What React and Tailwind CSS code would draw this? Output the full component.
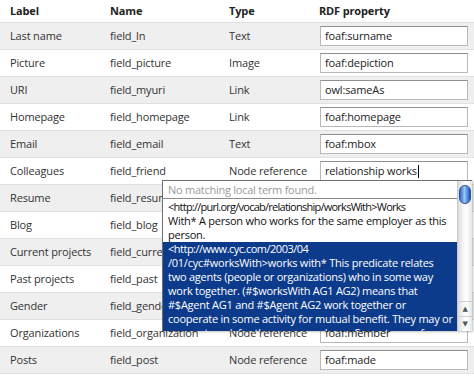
import React from "react";

const rows = [
  ["Last name", "field_ln", "Text", "foaf:surname"],
  ["Picture", "field_picture", "Image", "foaf:depiction"],
  ["URI", "field_myuri", "Link", "owl:sameAs"],
  ["Homepage", "field_homepage", "Link", "foaf:homepage"],
  ["Email", "field_email", "Text", "foaf:mbox"],
  ["Colleagues", "field_friend", "Node reference", "relationship works"],
  ["Resume", "field_resume", "Node reference", ""],
  ["Blog", "field_blog", "Node reference", ""],
  ["Current projects", "field_current", "Node reference", ""],
  ["Past projects", "field_past", "Node reference", ""],
  ["Gender", "field_gender", "Text", ""],
  ["Organizations", "field_organization", "Node reference", "foaf:member"],
  ["Posts", "field_post", "Node reference", "foaf:made"],
];

const item1 = [
  ["<http://purl.org/vocab/relationship/worksWith>Works", true],
  ["With* A person who works for the same employer as this", false],
  ["person.", false],
];
const item2 = [
  ["<http://www.cyc.com/2003/04", true],
  ["/01/cyc#worksWith>works with* This predicate relates", false],
  ["two agents (people or organizations) who in some way", false],
  ["work together. (#$worksWith AG1 AG2) means that", false],
  ["#$Agent AG1 and #$Agent AG2 work together or", false],
  ["cooperate in some activity for mutual benefit. They may or", false],
  ["may not work for the same employer. Some types of", false],
];

export default function App() {
  return (
    <div className="relative w-[474px] h-[377px] overflow-hidden bg-white text-[11px] tracking-[-0.15px] text-[#333] font-['Open_Sans','DejaVu_Sans',sans-serif]">
      <div className="flex items-center h-[23px] font-bold text-[#222] border-b border-[#dedede]">
        <div className="w-[110px] pl-[10px]">Label</div>
        <div className="w-[119px]">Name</div>
        <div className="w-[90px]">Type</div>
        <div>RDF property</div>
      </div>
      {rows.map((r, i) => (
        <div
          key={i}
          className={`flex items-center h-[27px] border-b border-[#e0e0e0] ${i % 2 === 0 ? "bg-[#efefef]" : "bg-white"}`}
        >
          <div className="w-[110px] pl-[10px] whitespace-nowrap overflow-hidden">{r[0]}</div>
          <div className="w-[119px] whitespace-nowrap overflow-hidden">{r[1]}</div>
          <div className="w-[90px] whitespace-nowrap overflow-hidden">{r[2]}</div>
          <div className="w-[148px] h-[20px] ml-[1px] bg-white border border-[#b8b8b8] border-t-[#8f8f8f] flex items-center px-[4px] text-[#222] whitespace-nowrap overflow-hidden">
            {r[3]}
            {i === 5 && <span className="inline-block w-px h-[13px] bg-black ml-[1px]" />}
          </div>
        </div>
      ))}

      <div className="absolute left-[162px] top-[180px] w-[310px] h-[151px] bg-white border-l border-t border-[#6f6f6f] flex overflow-hidden shadow-[1px_1px_2px_rgba(0,0,0,0.25)]">
        <div className="flex-1 overflow-hidden leading-[14px] tracking-[-0.25px]">
          <div className="h-[18px] flex items-center pl-[5px] text-[#9a9a9a] border-b border-[#8a8a8a] whitespace-nowrap">
            No matching local term found.
          </div>
          <div className="pt-[1px] pl-[5px] text-[#111]">
            {item1.map(([l, u], k) => (
              <div key={k} className={`whitespace-nowrap ${u ? "tracking-[-0.75px]" : ""}`}>{l}</div>
            ))}
          </div>
          <div className="bg-[#0d3b8c] text-white pl-[5px] h-[200px]">
            {item2.map(([l, u], k) => (
              <div key={k} className={`whitespace-nowrap ${u ? "tracking-[-0.5px]" : ""}`}>{l}</div>
            ))}
          </div>
        </div>
        <div className="w-[15px] h-full flex flex-col bg-[linear-gradient(to_right,#dcdcdc,#f7f7f7_40%,#ffffff_60%,#e6e6e6)] border-l border-[#c8c8c8]">
          <div className="flex-1 px-[1px] pt-[4px] pb-[2px]">
            <div className="h-[19px] w-[12px] rounded-full bg-[linear-gradient(to_right,#2c66c8,#9cc6f5_45%,#5a96e4_70%,#1e55b5)] border border-[#2a4f93]" />
          </div>
          <div className="h-[15px] flex items-center justify-center text-[7px] text-[#555] border-t border-[#cfcfcf]">▲</div>
          <div className="h-[15px] flex items-center justify-center text-[7px] text-[#555] border-t border-[#cfcfcf]">▼</div>
        </div>
      </div>
    </div>
  );
}
